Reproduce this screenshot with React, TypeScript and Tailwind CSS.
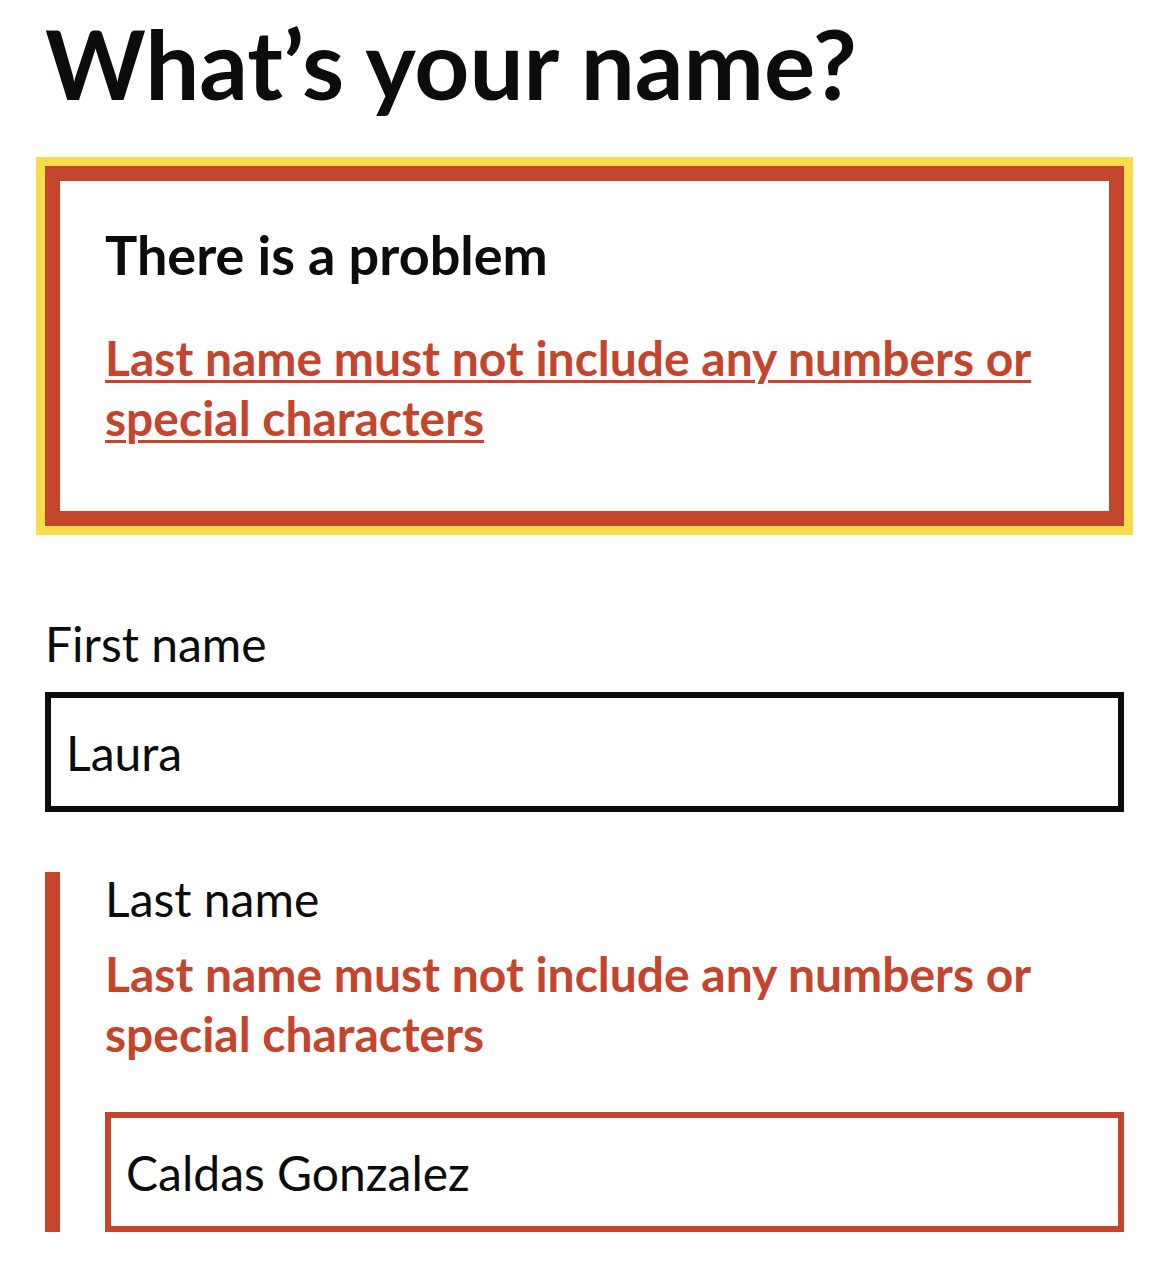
import { useState } from 'react'

const ERROR = 'Last name must not include any numbers or special characters'

export default function App() {
  const [first, setFirst] = useState('Laura')
  const [last, setLast] = useState('Caldas Gonzalez')

  return (
    <main className="min-h-screen bg-white px-[45px] font-['Lato',sans-serif] text-[#0b0c0c]">
      <h1 className="mt-[10px] mb-[51px] text-[96px] leading-[105px] font-bold">
        What’s your name?
      </h1>

      <div
        role="alert"
        tabIndex={-1}
        className="border-[15px] border-[#c5442c] px-[45px] pt-[44px] pb-[63px] outline-[9px] outline-[#f8dc4b]"
      >
        <h2 className="mb-[43px] text-[54px] leading-[60px] font-bold">There is a problem</h2>
        <ul>
          <li>
            <a
              href="#last-name"
              className="text-[48px] leading-[60px] font-bold text-[#c5442c] underline decoration-[3px] underline-offset-[4px]"
            >
              {ERROR}
            </a>
          </li>
        </ul>
      </div>

      <div className="mt-[88px] mb-[60px]">
        <label htmlFor="first-name" className="mb-[18px] block text-[48px] leading-[60px]">
          First name
        </label>
        <input
          id="first-name"
          value={first}
          onChange={(e) => setFirst(e.target.value)}
          className="block h-[120px] w-full border-[6px] border-[#0b0c0c] px-[15px] text-[48px] outline-none"
        />
      </div>

      <div className="border-l-[15px] border-[#c5442c] pl-[45px]">
        <label htmlFor="last-name" className="block pt-[2px] text-[48px] leading-[50px]">
          Last name
        </label>
        <p className="mt-[20px] mb-[48px] text-[48px] leading-[60px] font-bold text-[#c5442c]">{ERROR}</p>
        <input
          id="last-name"
          value={last}
          onChange={(e) => setLast(e.target.value)}
          className="block h-[120px] w-full border-[6px] border-[#c5442c] px-[15px] text-[48px] outline-none"
        />
      </div>
    </main>
  )
}
